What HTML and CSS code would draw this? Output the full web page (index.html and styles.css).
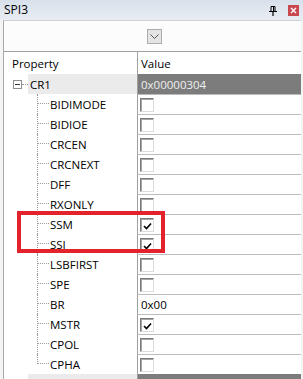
FILE: index.html
```html
<!DOCTYPE html>
<html>
<head>
<meta charset="utf-8">
<link rel="stylesheet" href="styles.css">
</head>
<body>
<div class="window">
  <div class="titlebar">
    <span class="title">SPI3</span>
    <span class="tb-icons">
      <svg class="pin" width="8" height="10" viewBox="0 0 8 10"><path d="M2 0.5h4v5h-4z M4.5 0.5v5" fill="none" stroke="#000" stroke-width="1"/><path d="M0 5.5h8" stroke="#000" stroke-width="1"/><path d="M4 6v4" stroke="#000" stroke-width="1.2"/></svg>
      <span class="close"><svg width="7" height="7" viewBox="0 0 7 7"><path d="M1 1L6 6M6 1L1 6" stroke="#fff" stroke-width="1.4"/></svg></span>
    </span>
  </div>
  <div class="panel">
    <div class="toolbar">
      <span class="dropbtn"><svg width="9" height="6" viewBox="0 0 9 6"><path d="M0.5 0.5L4.5 4.5L8.5 0.5" fill="none" stroke="#555" stroke-width="1"/></svg></span>
    </div>
    <div class="grid">
      <div class="row header"><div class="prop">Property</div><div class="val">Value</div></div>
      <div class="row cat"><div class="prop"><span class="expander"><span class="minus"></span></span><span class="hline"></span><span class="cat-name">CR1</span></div><div class="val dark">0x00000304</div></div>
      <div class="row child"><div class="prop"><span class="tree"><span></span></span><span class="name">BIDIMODE</span></div><div class="val"><span class="cb"></span></div></div>
      <div class="row child"><div class="prop"><span class="tree"><span></span></span><span class="name">BIDIOE</span></div><div class="val"><span class="cb"></span></div></div>
      <div class="row child"><div class="prop"><span class="tree"><span></span></span><span class="name">CRCEN</span></div><div class="val"><span class="cb"></span></div></div>
      <div class="row child"><div class="prop"><span class="tree"><span></span></span><span class="name">CRCNEXT</span></div><div class="val"><span class="cb"></span></div></div>
      <div class="row child"><div class="prop"><span class="tree"><span></span></span><span class="name">DFF</span></div><div class="val"><span class="cb"></span></div></div>
      <div class="row child"><div class="prop"><span class="tree"><span></span></span><span class="name">RXONLY</span></div><div class="val"><span class="cb"></span></div></div>
      <div class="row child"><div class="prop"><span class="tree"><span></span></span><span class="name">SSM</span></div><div class="val"><span class="cb"><svg width="9" height="8" viewBox="0 0 9 8"><path d="M1 4L3.5 6.5L8 1.5" fill="none" stroke="#000" stroke-width="1.6"/></svg></span></div></div>
      <div class="row child"><div class="prop"><span class="tree"><span></span></span><span class="name">SSI</span></div><div class="val"><span class="cb"><svg width="9" height="8" viewBox="0 0 9 8"><path d="M1 4L3.5 6.5L8 1.5" fill="none" stroke="#000" stroke-width="1.6"/></svg></span></div></div>
      <div class="row child"><div class="prop"><span class="tree"><span></span></span><span class="name">LSBFIRST</span></div><div class="val"><span class="cb"></span></div></div>
      <div class="row child"><div class="prop"><span class="tree"><span></span></span><span class="name">SPE</span></div><div class="val"><span class="cb"></span></div></div>
      <div class="row child"><div class="prop"><span class="tree"><span></span></span><span class="name">BR</span></div><div class="val text">0x00</div></div>
      <div class="row child"><div class="prop"><span class="tree"><span></span></span><span class="name">MSTR</span></div><div class="val"><span class="cb"><svg width="9" height="8" viewBox="0 0 9 8"><path d="M1 4L3.5 6.5L8 1.5" fill="none" stroke="#000" stroke-width="1.6"/></svg></span></div></div>
      <div class="row child"><div class="prop"><span class="tree"><span></span></span><span class="name">CPOL</span></div><div class="val"><span class="cb"></span></div></div>
      <div class="row child"><div class="prop"><span class="tree last"><span></span></span><span class="name">CPHA</span></div><div class="val"><span class="cb"></span></div></div>
      <div class="row cat"><div class="prop"><span class="spacer"></span><span class="cat-name"></span></div><div class="val dark"></div></div>
    </div>
  </div>
  <div class="highlight"></div>
</div>
</body>
</html>
```

FILE: styles.css
```css
html, body {
  margin: 0;
  padding: 0;
}
body {
  width: 303px;
  height: 379px;
  overflow: hidden;
  background: #f4f4f4;
  font-family: "Open Sans", "Noto Sans", sans-serif;
  font-size: 11.5px;
  color: #000;
}
.window {
  position: relative;
  width: 303px;
  height: 379px;
  display: flex;
  flex-direction: column;
}
.titlebar {
  height: 20px;
  flex: none;
  display: flex;
  align-items: center;
  justify-content: space-between;
  padding: 0 4px 0 4px;
  background: linear-gradient(#d8e1eb, #e8edf3);
  box-sizing: border-box;
}
.title {
  font-size: 12px;
  line-height: 20px;
  margin-top: -1px;
}
.tb-icons {
  display: flex;
  align-items: center;
  gap: 11px;
}
.pin {
  display: block;
  margin-top: 1px;
}
.close {
  width: 11px;
  height: 11px;
  background: #c9484f;
  display: flex;
  align-items: center;
  justify-content: center;
}
.close svg { display: block; }
.panel {
  flex: 1;
  margin: 0 2px 0 3px;
  border-left: 1px solid #a8a8a8;
  border-top: 1px solid #d0d0d0;
  background: #fff;
  display: flex;
  flex-direction: column;
  min-height: 0;
}
.toolbar {
  height: 30px;
  flex: none;
  display: flex;
  align-items: center;
  justify-content: center;
  padding-left: 3px;
  border-bottom: 1px solid #a0a0a0;
  background: #fcfcfc;
}
.dropbtn {
  width: 15px;
  height: 15px;
  box-sizing: border-box;
  border: 1px solid #acacac;
  background: #e4e4e4;
  display: flex;
  align-items: center;
  justify-content: center;
}
.dropbtn svg { display: block; margin-top: 1px; }
.grid {
  display: flex;
  flex-direction: column;
}
.row {
  display: grid;
  grid-template-columns: 133px 1fr;
  height: 20px;
  flex: none;
}
.prop {
  display: flex;
  align-items: center;
  white-space: nowrap;
}
.val {
  border-left: 1px solid #a0a0a0;
  border-top: 1px solid #bcbcbc;
  display: flex;
  align-items: center;
  padding-left: 2px;
}
.header {
  height: 22px;
}
.header .prop {
  padding-left: 8px;
}
.header .val {
  border-top: none;
  padding-left: 3px;
}
.cat .prop {
  padding-left: 9px;
}
.cat .val {
  border-top: none;
}
.expander {
  width: 9px;
  height: 9px;
  box-sizing: border-box;
  border: 1px solid #8e8e8e;
  display: flex;
  align-items: center;
  justify-content: center;
  background: #fff;
}
.minus {
  width: 5px;
  height: 1px;
  background: #333;
}
.hline {
  width: 6px;
  border-top: 1px dotted #9a9a9a;
}
.spacer {
  width: 15px;
}
.cat-name {
  flex: 1;
  align-self: stretch;
  background: #ebebeb;
  display: flex;
  align-items: center;
  padding-left: 2px;
}
.val.dark {
  background: #7c7c7c;
  color: #efefef;
  padding-left: 3px;
}
.val.text {
  padding-left: 3px;
}
.child .prop {
  padding-left: 33px;
  align-items: stretch;
}
.tree {
  width: 12px;
  box-sizing: border-box;
  border-left: 1px dotted #9a9a9a;
  flex: none;
}
.tree span {
  display: block;
  height: 10px;
  box-sizing: border-box;
  border-bottom: 1px dotted #9a9a9a;
}
.tree.last {
  border-left: none;
}
.tree.last span {
  border-left: 1px dotted #9a9a9a;
}
.name {
  display: flex;
  align-items: center;
  padding-left: 1px;
}
.cb {
  width: 14px;
  height: 14px;
  box-sizing: border-box;
  border-style: solid;
  border-width: 1px;
  border-color: #7a7a7a #dcdcdc #dcdcdc #7a7a7a;
  box-shadow: inset 1px 1px 0 #a6a6a6;
  background: #fff;
  display: flex;
  align-items: center;
  justify-content: center;
  margin-top: 1px;
}
.cb svg {
  display: block;
  margin: 1px 0 0 1px;
}
.highlight {
  position: absolute;
  left: 17px;
  top: 211px;
  width: 148px;
  height: 42px;
  box-sizing: border-box;
  border: 4px solid #e3232b;
}
```
